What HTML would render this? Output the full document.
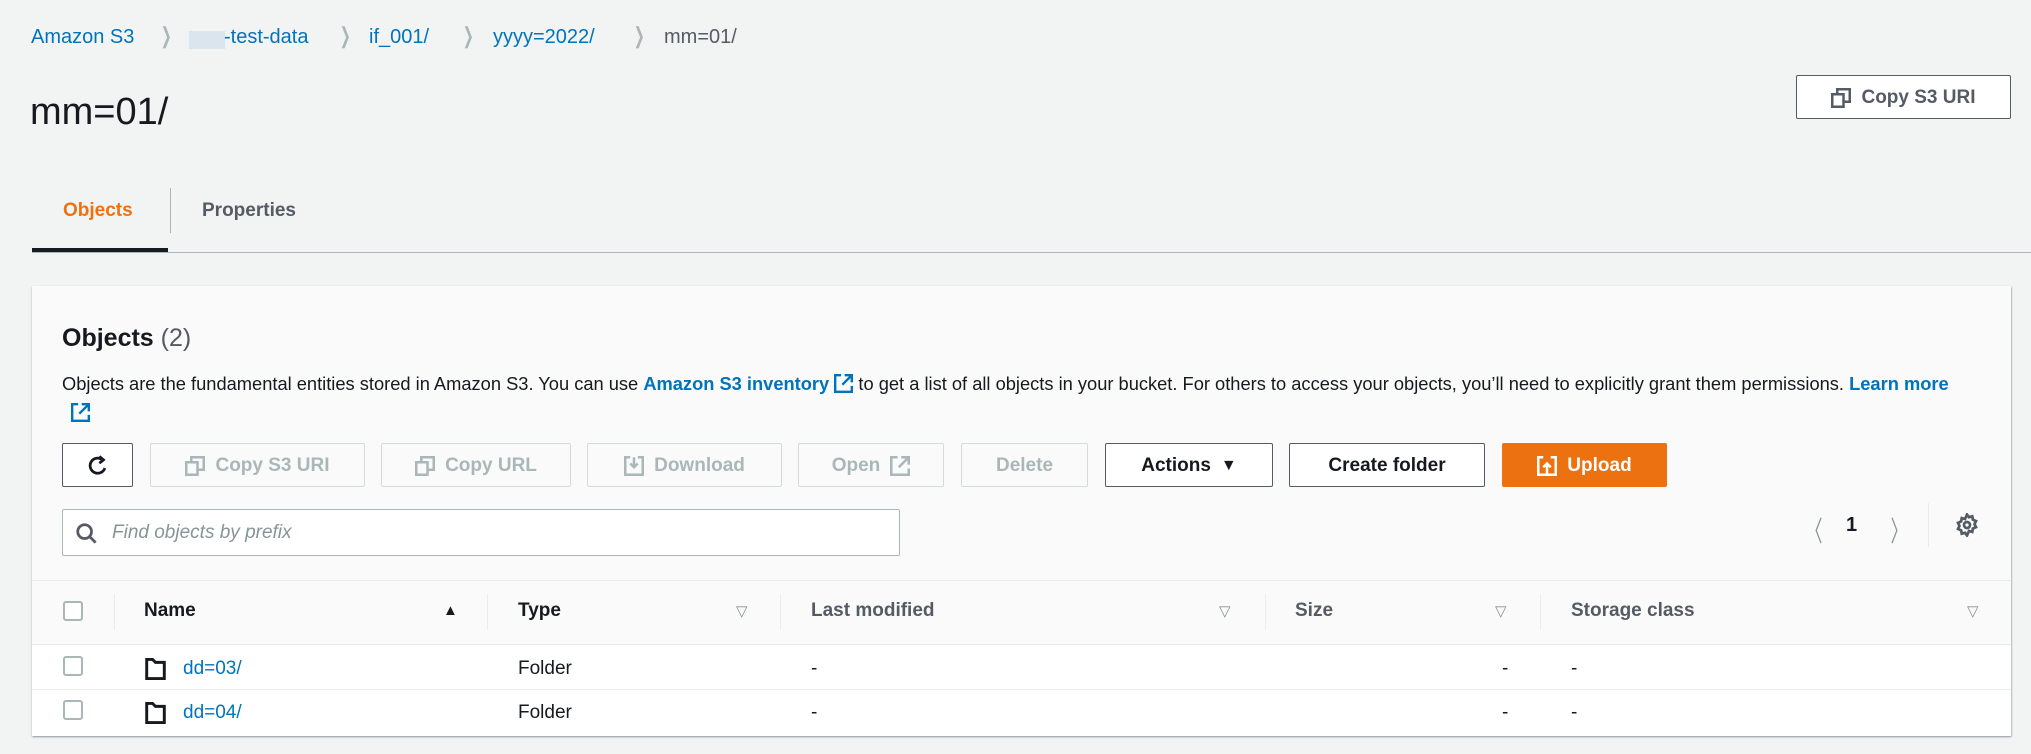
<!DOCTYPE html>
<html><head><meta charset="utf-8"><style>
*{box-sizing:border-box;margin:0;padding:0}
body{width:2031px;height:754px;background:#f2f3f3;font-family:"Liberation Sans",sans-serif;color:#16191f;position:relative;overflow:hidden}
.a{position:absolute;white-space:nowrap}
.lnk{color:#0073bb}
.bc{font-size:20px;top:26px}
.chev{color:#aab7b8;font-size:22px;top:23px;transform:scaleX(.6)}
.btn{position:absolute;top:443px;height:44px;border:1px solid #d5dbdb;border-radius:2px;background:#fafafa;color:#aab7b8;font-weight:bold;font-size:19px;display:flex;align-items:center;justify-content:center;gap:10px;padding-top:2px}
.btn.en{border:1px solid #545b64;background:#fff;color:#16191f}
.hd{font-weight:bold;font-size:19px;top:600px;color:#16191f}
.tri{top:602px;color:#879596;font-size:15px}
.vd{position:absolute;top:594px;width:1px;height:36px;background:#eaeded}
.cb{position:absolute;width:20px;height:20px;border:2px solid #aab7b8;border-radius:3px;background:#fff;left:63px}
.cell{font-size:19px}
</style></head><body>
<div class="a bc lnk" style="left:31px">Amazon S3</div>
<div class="a chev" style="left:157px">❯</div>
<div class="a" style="left:189px;top:31px;width:36px;height:18px;background:#dbe5ee"></div>
<div class="a bc lnk" style="left:224px">-test-data</div>
<div class="a chev" style="left:336px">❯</div>
<div class="a bc lnk" style="left:369px">if_001/</div>
<div class="a chev" style="left:459px">❯</div>
<div class="a bc lnk" style="left:493px">yyyy=2022/</div>
<div class="a chev" style="left:630px">❯</div>
<div class="a bc" style="left:664px;color:#545b64">mm=01/</div>

<div class="a" style="left:30px;top:91px;font-size:38px">mm=01/</div>

<div class="btn en" style="left:1796px;top:75px;width:215px;height:44px;color:#545b64"><svg width="20" height="20" viewBox="0 0 16 16" fill="none" stroke="#545b64" stroke-width="2"><rect x="1" y="5" width="9" height="10"/><path d="M5 5V1h10v10h-5"/></svg>Copy S3 URI</div>

<div class="a" style="left:63px;top:200px;font-size:19px;font-weight:bold;color:#ec7211">Objects</div>
<div class="a" style="left:170px;top:188px;width:1px;height:45px;background:#aab7b8"></div>
<div class="a" style="left:202px;top:200px;font-size:19px;font-weight:bold;color:#545b64">Properties</div>
<div class="a" style="left:32px;top:252px;width:1999px;height:1px;background:#aab7b8"></div>
<div class="a" style="left:32px;top:248px;width:136px;height:4px;background:#16191f"></div>

<div class="a" style="left:32px;top:286px;width:1979px;height:450px;background:#fafafa;box-shadow:0 1px 2px rgba(0,28,36,.3),1px 1px 1px rgba(0,28,36,.15)"></div>
<div class="a" style="left:62px;top:324px;font-size:25px;font-weight:bold">Objects <span style="font-weight:normal;color:#545b64">(2)</span></div>
<div class="a" style="left:62px;top:373px;font-size:18.3px;color:#16191f">Objects are the fundamental entities stored in Amazon S3. You can use <b class="lnk">Amazon S3 inventory</b> <svg width="19" height="19" viewBox="0 0 16 16" fill="none" stroke="#0073bb" stroke-width="2" style="vertical-align:-3px"><path d="M6 1H1v14h14v-5M9 1h6v6M15 1 7 9"/></svg> to get a list of all objects in your bucket. For others to access your objects, you’ll need to explicitly grant them permissions. <b class="lnk">Learn more</b></div>
<svg class="a" style="left:71px;top:403px" width="19" height="19" viewBox="0 0 16 16" fill="none" stroke="#0073bb" stroke-width="2"><path d="M6 1H1v14h14v-5M9 1h6v6M15 1 7 9"/></svg>

<div class="btn en" style="left:62px;width:71px"><svg width="22" height="22" viewBox="0 0 16 16" fill="none" stroke="#16191f" stroke-width="2"><path d="M13 9.5A5.5 5.5 0 1 1 10.5 3"/><path d="M9 1l3 2.5L9 6"/></svg></div>
<div class="btn" style="left:150px;width:215px"><svg width="20" height="20" viewBox="0 0 16 16" fill="none" stroke="#aab7b8" stroke-width="2"><rect x="1" y="5" width="9" height="10"/><path d="M5 5V1h10v10h-5"/></svg>Copy S3 URI</div>
<div class="btn" style="left:381px;width:190px"><svg width="20" height="20" viewBox="0 0 16 16" fill="none" stroke="#aab7b8" stroke-width="2"><rect x="1" y="5" width="9" height="10"/><path d="M5 5V1h10v10h-5"/></svg>Copy URL</div>
<div class="btn" style="left:587px;width:195px"><svg width="20" height="20" viewBox="0 0 16 16" fill="none" stroke="#aab7b8" stroke-width="2"><path d="M5 1H1v14h14V1h-4M8 1v8M5 6l3 3 3-3"/></svg>Download</div>
<div class="btn" style="left:798px;width:146px">Open <svg width="20" height="20" viewBox="0 0 16 16" fill="none" stroke="#aab7b8" stroke-width="2"><path d="M6 1H1v14h14v-5M9 1h6v6M15 1 7 9"/></svg></div>
<div class="btn" style="left:961px;width:127px">Delete</div>
<div class="btn en" style="left:1105px;width:168px">Actions <span style="font-size:16px">▼</span></div>
<div class="btn en" style="left:1289px;width:196px">Create folder</div>
<div class="btn" style="left:1502px;width:165px;background:#ec7211;border-color:#ec7211;color:#fff"><svg width="20" height="20" viewBox="0 0 16 16" fill="none" stroke="#fff" stroke-width="2"><path d="M5 1H1v14h14V1h-4M8 15V6M5 9l3-3 3 3"/></svg>Upload</div>

<div class="a" style="left:62px;top:509px;width:838px;height:47px;border:1px solid #aab7b8;border-radius:2px;background:#fff"></div>
<svg class="a" style="left:75px;top:522px" width="22" height="22" viewBox="0 0 16 16" fill="none" stroke="#545b64" stroke-width="2"><circle cx="7" cy="7" r="5"/><path d="M10.5 10.5 15 15"/></svg>
<div class="a" style="left:112px;top:522px;font-size:19px;font-style:italic;color:#879596">Find objects by prefix</div>

<div class="a" style="left:1800px;top:510px;font-size:28px;color:#879596;transform:scaleX(.6)">〈</div>
<div class="a" style="left:1846px;top:514px;font-size:20px;font-weight:bold">1</div>
<div class="a" style="left:1885px;top:510px;font-size:28px;color:#879596;transform:scaleX(.6)">〉</div>
<div class="a" style="left:1928px;top:503px;width:1px;height:44px;background:#eaeded"></div>
<svg class="a" style="left:1955px;top:513px" width="24" height="24" viewBox="0 0 16 16" fill="none" stroke="#545b64" stroke-width="1.8"><circle cx="8" cy="8" r="2"/><path d="M8 1l1.3 1.8 2.2-.6.4 2.2 2.1 1-1 2 1 2-2.1 1-.4 2.2-2.2-.6L8 15l-1.3-1.8-2.2.6-.4-2.2-2.1-1 1-2-1-2 2.1-1 .4-2.2 2.2.6z"/></svg>

<div class="a" style="left:32px;top:580px;width:1979px;height:1px;background:#eaeded"></div>
<div class="a" style="left:32px;top:644px;width:1979px;height:92px;background:#fff"></div>
<div class="a" style="left:32px;top:644px;width:1979px;height:1px;background:#eaeded"></div>
<div class="a" style="left:32px;top:689px;width:1979px;height:1px;background:#eaeded"></div>
<div class="cb" style="top:601px"></div>
<div class="vd" style="left:114px"></div>
<div class="a hd" style="left:144px">Name</div>
<div class="a" style="left:443px;top:602px;font-size:15px">▲</div>
<div class="vd" style="left:487px"></div>
<div class="a hd" style="left:518px">Type</div>
<div class="a tri" style="left:736px">▽</div>
<div class="vd" style="left:780px"></div>
<div class="a hd" style="left:811px;color:#545b64">Last modified</div>
<div class="a tri" style="left:1219px">▽</div>
<div class="vd" style="left:1265px"></div>
<div class="a hd" style="left:1295px;color:#545b64">Size</div>
<div class="a tri" style="left:1495px">▽</div>
<div class="vd" style="left:1540px"></div>
<div class="a hd" style="left:1571px;color:#545b64">Storage class</div>
<div class="a tri" style="left:1967px">▽</div>

<div class="cb" style="top:656px"></div>
<svg class="a" style="left:145px;top:658px" width="21" height="22" viewBox="0 0 14 15" fill="none" stroke="#16191f" stroke-width="2"><path d="M1 1h4l2 2h6v11H1z"/></svg>
<div class="a cell lnk" style="left:183px;top:658px">dd=03/</div>
<div class="a cell" style="left:518px;top:658px">Folder</div>
<div class="a cell" style="left:811px;top:658px">-</div>
<div class="a cell" style="left:1502px;top:658px">-</div>
<div class="a cell" style="left:1571px;top:658px">-</div>

<div class="cb" style="top:700px"></div>
<svg class="a" style="left:145px;top:702px" width="21" height="22" viewBox="0 0 14 15" fill="none" stroke="#16191f" stroke-width="2"><path d="M1 1h4l2 2h6v11H1z"/></svg>
<div class="a cell lnk" style="left:183px;top:702px">dd=04/</div>
<div class="a cell" style="left:518px;top:702px">Folder</div>
<div class="a cell" style="left:811px;top:702px">-</div>
<div class="a cell" style="left:1502px;top:702px">-</div>
<div class="a cell" style="left:1571px;top:702px">-</div>
</body></html>
